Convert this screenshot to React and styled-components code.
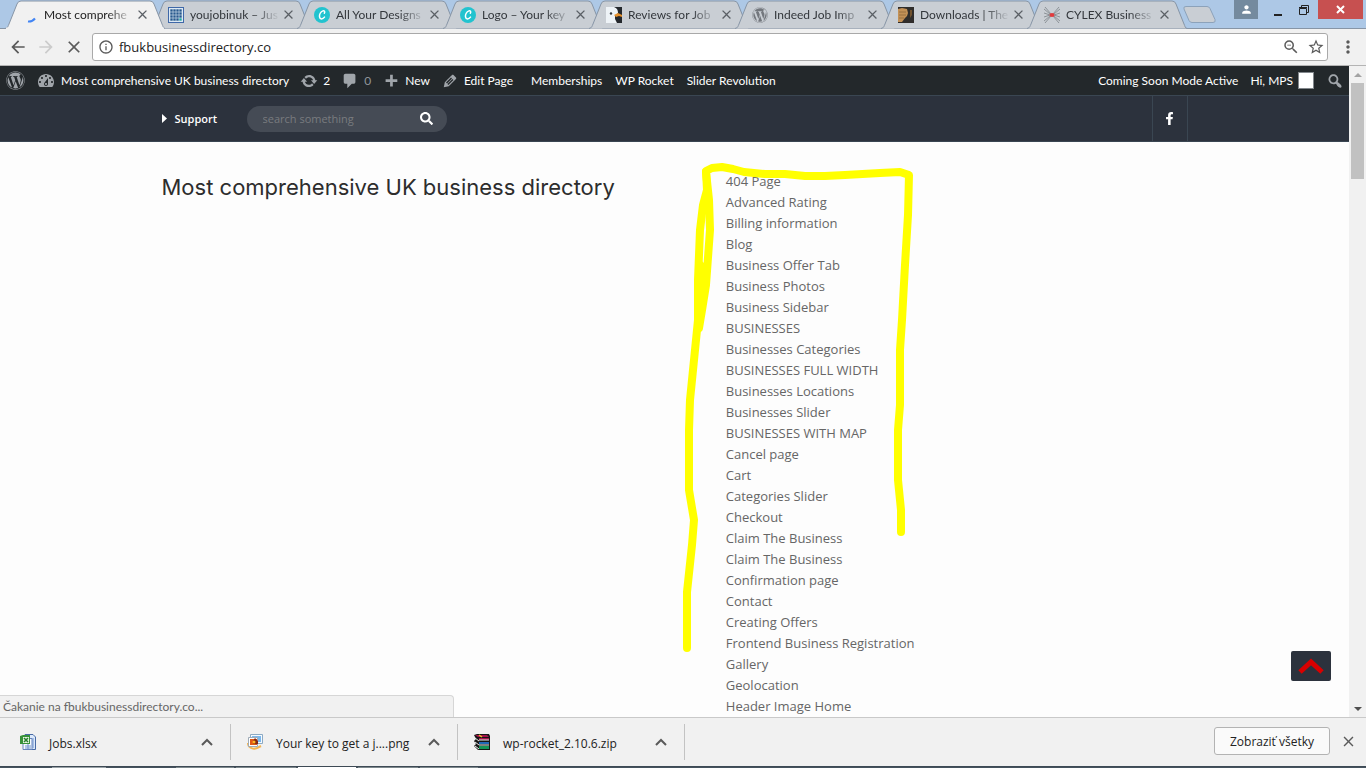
import React from "react";
import styled, { createGlobalStyle } from "styled-components";
import { FaFacebookF, FaSearch, FaWordpress } from "react-icons/fa";
import {
  MdArrowBack,
  MdArrowForward,
  MdClose,
  MdInfoOutline,
  MdMoreVert,
  MdPerson,
  MdStarBorder,
  MdZoomOut,
} from "react-icons/md";

const tabs = [
  { title: "Most comprehe", icon: "spinner", active: true },
  { title: "youjobinuk – Jus", icon: "grid" },
  { title: "All Your Designs", icon: "canva" },
  { title: "Logo – Your key", icon: "canva" },
  { title: "Reviews for Job", icon: "bird" },
  { title: "Indeed Job Imp", icon: "wordpress" },
  { title: "Downloads | The", icon: "fist" },
  { title: "CYLEX Business", icon: "cylex" },
];

const pages = [
  "404 Page",
  "Advanced Rating",
  "Billing information",
  "Blog",
  "Business Offer Tab",
  "Business Photos",
  "Business Sidebar",
  "BUSINESSES",
  "Businesses Categories",
  "BUSINESSES FULL WIDTH",
  "Businesses Locations",
  "Businesses Slider",
  "BUSINESSES WITH MAP",
  "Cancel page",
  "Cart",
  "Categories Slider",
  "Checkout",
  "Claim The Business",
  "Claim The Business",
  "Confirmation page",
  "Contact",
  "Creating Offers",
  "Frontend Business Registration",
  "Gallery",
  "Geolocation",
  "Header Image Home",
];

const downloads = [
  { name: "Jobs.xlsx", icon: "excel" },
  { name: "Your key to get a j....png", icon: "image" },
  { name: "wp-rocket_2.10.6.zip", icon: "archive" },
];

const dashicons = {
  dashboard:
    "M3.76 16h12.48c1.1-1.37 1.76-3.11 1.76-5 0-4.42-3.58-8-8-8s-8 3.58-8 8c0 1.89.66 3.63 1.76 5zM10 4c.55 0 1 .45 1 1s-.45 1-1 1-1-.45-1-1 .45-1 1-1zM6 6c.55 0 1 .45 1 1s-.45 1-1 1-1-.45-1-1 .45-1 1-1zm8 0c.55 0 1 .45 1 1s-.45 1-1 1-1-.45-1-1 .45-1 1-1zm-5.37 5.55L12 7v6c0 1.1-.9 2-2 2s-2-.9-2-2c0-.57.24-1.08.63-1.45zM4 10c.55 0 1 .45 1 1s-.45 1-1 1-1-.45-1-1 .45-1 1-1zm12 0c.55 0 1 .45 1 1s-.45 1-1 1-1-.45-1-1 .45-1 1-1zm-5 3c0-.55-.45-1-1-1s-1 .45-1 1 .45 1 1 1 1-.45 1-1z",
  update:
    "M10.2 3.28c3.53 0 6.43 2.61 6.92 6h2.08l-3.5 4-3.5-4h2.32c-.45-1.97-2.21-3.45-4.32-3.45-1.45 0-2.73.71-3.54 1.78L4.95 5.66C6.23 4.2 8.11 3.28 10.2 3.28zm-.4 13.44c-3.52 0-6.43-2.61-6.92-6H.8l3.5-4c1.17 1.33 2.33 2.67 3.5 4H5.48c.45 1.97 2.21 3.45 4.32 3.45 1.45 0 2.73-.71 3.54-1.78l1.71 1.95c-1.28 1.46-3.15 2.38-5.25 2.38z",
  comment:
    "M5 2h9c1.1 0 2 .9 2 2v7c0 1.1-.9 2-2 2h-2l-5 5v-5H5c-1.1 0-2-.9-2-2V4c0-1.1.9-2 2-2z",
  plus: "M17 8v3h-5v5H9v-5H4V8h5V3h3v5h5z",
  edit: "M13.89 3.39l2.71 2.72c.46.46.42 1.24.03 1.64l-8.01 8.02-5.56 1.16 1.16-5.58s7.6-7.63 7.99-8.03c.39-.39 1.22-.39 1.68.07zm-2.73 2.79l-5.59 5.61 1.11 1.11 5.54-5.65zm-2.97 8.23l5.58-5.6-1.07-1.08-5.59 5.6z",
  search:
    "M12.14 4.18c1.87 1.87 2.11 4.75.72 6.89.12.1.22.21.36.31.2.16.47.36.81.59.34.24.56.39.66.47.42.31.73.57.94.78.32.32.6.65.84 1 .25.35.44.69.59 1.04.14.35.21.68.18 1-.02.32-.14.59-.36.81s-.49.34-.81.36c-.31.02-.65-.04-.99-.19-.35-.14-.7-.34-1.04-.59-.35-.24-.68-.52-1-.84-.21-.21-.47-.52-.77-.93-.1-.13-.25-.35-.47-.66-.22-.32-.4-.57-.56-.78-.16-.2-.29-.35-.44-.5-2.07 1.09-4.69.76-6.44-.98-2.14-2.15-2.14-5.64 0-7.78 2.15-2.15 5.63-2.15 7.78 0zm-1.41 6.36c1.36-1.37 1.36-3.58 0-4.95-1.37-1.37-3.59-1.37-4.95 0-1.37 1.37-1.37 3.58 0 4.95 1.36 1.37 3.58 1.37 4.95 0z",
};

const Dashicon = ({ name, size = 20 }) => (
  <svg width={size} height={size} viewBox="0 0 20 20" fill="currentColor" aria-hidden="true">
    <path d={dashicons[name]} />
  </svg>
);

const Favicon = ({ name }) => {
  if (name === "wordpress") return <FaWordpress size={16} color="#73777d" />;
  return (
    <svg width="16" height="16" viewBox="0 0 16 16" aria-hidden="true">
      {name === "spinner" && (
        <path d="M6 14.5q4 .5 7-3" fill="none" stroke="#4285f4" strokeWidth="2" />
      )}
      {name === "grid" && (
        <>
          <path fill="#3f68a8" d="M0 0h16v16H0z" />
          <path fill="#dce9f4" d="M1 1h14v14H1z" />
          {[2, 5, 8, 11].map((y) =>
            [2, 5, 8, 11].map((x) => (
              <rect
                key={`${x}-${y}`}
                x={x + 0.3}
                y={y + 0.3}
                width="2.4"
                height="2.4"
                fill={x === 11 && y === 11 ? "#24a9a4" : "#28598d"}
              />
            ))
          )}
        </>
      )}
      {name === "canva" && (
        <>
          <circle cx="8" cy="8" r="8" fill="#22c3cf" />
          <path
            d="M10.3 6.2c1-1.3.1-2.7-1.4-2.3C6.7 4.5 5.1 7.6 5.5 9.9c.4 2.7 3.2 2.5 5 .2"
            fill="none"
            stroke="#fff"
            strokeWidth="1.5"
            strokeLinecap="round"
          />
        </>
      )}
      {name === "bird" && (
        <>
          <path fill="#24282d" d="M0 0h16v16H0z" />
          <path fill="#eef3f7" d="M0 0h8c3 1 4 3 4 6l-3 3v3l2 4H0z" />
          <path fill="#e5902d" d="M8 8l4-2 4 2v2l-3-1-3 1z" />
          <circle cx="5" cy="6.5" r="1.2" fill="#30363c" />
        </>
      )}
      {name === "fist" && (
        <>
          <path fill="#302d2b" d="M0 0h16v16H0z" />
          <path fill="#c39156" d="M0 2l4-1 5 1 1 4-1 3-2 2-3 4H0z" />
          <path d="M1 5h7M1 8h7M1 11h5" stroke="#9a7040" strokeWidth="1" />
          <path fill="#71522e" d="M12 3h2v5l-2 3z" />
        </>
      )}
      {name === "cylex" && (
        <>
          <path
            d="M0 2l6 5M1 0l6 7M15 0L9 7m7-5l-6 5M0 14l6-5m-5 7l6-7m8 7L9 9m7 5l-6-5M0 6l6 2-6 2M16 6l-6 2 6 2"
            fill="none"
            stroke="#8c9297"
            strokeWidth="1"
          />
          <ellipse cx="8" cy="8" rx="2.5" ry="2" fill="#e23b3e" />
        </>
      )}
    </svg>
  );
};

const FileIcon = ({ name }) => (
  <svg width="16" height="16" viewBox="0 0 16 16" aria-hidden="true">
    {name === "excel" && (
      <>
        <path d="M5 .5h8l2.5 2.5v12.5H5z" fill="#dce9fb" stroke="#486aa5" />
        <path d="M3 4.5h9v11H3z" fill="#f5faff" stroke="#6684bb" />
        <path d="M5 12h6M5 14h6M8 10v5M13 4v10" stroke="#7193cc" />
        <path fill="#38923a" d="M0 2l3-1h7v9H0z" />
        <path fill="#e4f5df" d="M3 3h6v6H3z" />
        <path d="M4 4l4 4m0-4L4 8" stroke="#277d2c" strokeWidth="1.5" />
      </>
    )}
    {name === "image" && (
      <>
        <path d="M1 9c0 4 4 7 9 5l4-2" fill="none" stroke="#f4b551" strokeWidth="2" />
        <path d="M3.5.5h12v9h-12z" fill="#f5faff" stroke="#8caac4" />
        <path d="M5 2h9v6H5z" fill="#7cb8ed" />
        <path d="M1.5 3.5h9v9h-9z" fill="#fff" stroke="#9eabb7" />
        <path fill="#e25a15" d="M3 5h7v6H3z" />
        <path fill="#872810" d="M6 7l2-3 3 3v3H6z" />
        <circle cx="7" cy="8" r="1.5" fill="#ffb423" />
      </>
    )}
    {name === "archive" && (
      <>
        <path fill="#161616" d="M0 1l3-1h12l1 2v14H4l-4-4 2-2-2-3 2-2z" />
        <path fill="#a31249" d="M1 1h12l2 2H4zM5 4h10v2H5z" />
        <path fill="#2268b8" d="M5 8h10v2H5z" />
        <path fill="#149457" d="M5 12h10v3H5z" />
        <path d="M1 4l4 3M1 8l4 3M1 12l4 3M5 6h10M5 11h10" stroke="#e9eae7" />
        <path d="M5 1l3 2" stroke="#f1c82b" strokeWidth="1.5" />
      </>
    )}
  </svg>
);

const BrowserTab = ({ tab }) => (
  <Tab $active={tab.active}>
    <TabShape viewBox="0 0 160 29" preserveAspectRatio="none" aria-hidden="true">
      <path
        d="M0 28.5C3 28 3 26 4 24L12 4q1-3 4-3h129q3 0 4 3l8 20c1 2 1 4 3 4.5"
        fill={tab.active ? "#f1f1f1" : "#c9ced4"}
        stroke="#8795a6"
      />
      {tab.active && <path d="M1 28.5h158" stroke="#f1f1f1" strokeWidth="2" />}
    </TabShape>
    <TabBody>
      <Favicon name={tab.icon} />
      <TabTitle>{tab.title}</TabTitle>
      <IconButton $size={12} $color="#5a5f65" aria-label="Close tab">
        <MdClose size={15} />
      </IconButton>
    </TabBody>
  </Tab>
);

const App = () => {
  return (
    <Browser>
      <GlobalStyle />
      <TabStrip>
        {tabs.map((tab, index) => (
          <BrowserTab tab={tab} key={index} />
        ))}
        <NewTab aria-label="New tab">
          <svg width="36" height="19" viewBox="0 0 36 19">
            <path
              d="M4 1.5h21q2 0 3 2l5 11q1 3-2 3H10q-2 0-3-2L2 4Q1 1.5 4 1.5z"
              fill="#c9ced4"
              stroke="#8ca2ba"
            />
          </svg>
        </NewTab>
        <WindowControls>
          <WindowButton $width={24} $background="#748a9e" aria-label="Profile">
            <MdPerson size={13} color="#fff" />
          </WindowButton>
          <WindowButton $width={40} aria-label="Minimize">
            <svg width="10" height="12"><path d="M1 11h8" stroke="#222" strokeWidth="2" /></svg>
          </WindowButton>
          <WindowButton $width={12} aria-label="Restore">
            <svg width="12" height="12" viewBox="0 0 12 12" fill="none" stroke="#222">
              <path d="M1.5 4.5h7v6h-7zM1 3.5h8" />
              <path d="M3.5 3V1.5h7V8.5H9" />
            </svg>
          </WindowButton>
          <WindowButton $width={45} $background="#c75050" $last aria-label="Close">
            <svg width="10" height="10"><path d="M1 1l7 7m0-7L1 8" stroke="#fff" strokeWidth="2" /></svg>
          </WindowButton>
        </WindowControls>
      </TabStrip>
      <Toolbar>
        <NavButtons>
          <IconButton $size={20} aria-label="Back"><MdArrowBack size={20} /></IconButton>
          <IconButton $size={20} $color="#cbcbcb" aria-label="Forward"><MdArrowForward size={20} /></IconButton>
          <IconButton $size={20} aria-label="Stop"><MdClose size={20} /></IconButton>
        </NavButtons>
        <AddressBar>
          <MdInfoOutline size={16} />
          <AddressInput aria-label="Address" defaultValue="fbukbusinessdirectory.co" />
          <IconButton $size={16} aria-label="Zoom"><MdZoomOut size={18} /></IconButton>
          <IconButton $size={16} aria-label="Bookmark"><MdStarBorder size={18} /></IconButton>
        </AddressBar>
        <IconButton $size={20} aria-label="Menu"><MdMoreVert size={20} /></IconButton>
      </Toolbar>
      <Viewport>
        <Page>
          <AdminBar>
            <AdminGroup>
              <AdminLink href="#" aria-label="WordPress"><FaWordpress size={19} /></AdminLink>
              <AdminLink href="#"><Dashicon name="dashboard" /><span>Most comprehensive UK business directory</span></AdminLink>
              <AdminLink href="#"><Dashicon name="update" size={18} /><span>2</span></AdminLink>
              <AdminLink href="#" $muted><Dashicon name="comment" size={18} /><span>0</span></AdminLink>
              <AdminLink href="#"><Dashicon name="plus" size={18} /><span>New</span></AdminLink>
              <AdminLink href="#"><Dashicon name="edit" size={18} /><span>Edit Page</span></AdminLink>
            </AdminGroup>
            <AdminTextLinks>
              <AdminLink href="#"><span>Memberships</span></AdminLink>
              <AdminLink href="#"><span>WP Rocket</span></AdminLink>
              <AdminLink href="#"><span>Slider Revolution</span></AdminLink>
            </AdminTextLinks>
            <AdminRight>
              <AdminLink href="#"><span>Coming Soon Mode Active</span></AdminLink>
              <AdminLink href="#"><span>Hi, MPS</span><Avatar /></AdminLink>
              <AdminLink href="#" aria-label="Search"><Dashicon name="search" size={18} /></AdminLink>
            </AdminRight>
          </AdminBar>
          <TopBar>
            <Container>
              <SupportLink href="#">
                <svg width="5" height="9"><path d="M0 0l5 4.5L0 9z" fill="#fff" /></svg>
                Support
              </SupportLink>
              <SearchForm>
                <SearchInput aria-label="Search" placeholder="search something" />
                <IconButton $size={14} $color="#fff" aria-label="Search"><FaSearch size={13} /></IconButton>
              </SearchForm>
              <SocialLink href="#" aria-label="Facebook"><FaFacebookF size={13} /></SocialLink>
            </Container>
          </TopBar>
          <Main>
            <SiteTitle>Most comprehensive UK business directory</SiteTitle>
            <PageNav>
              <PageList>
                {pages.map((page, index) => (
                  <li key={index}><a href="#">{page}</a></li>
                ))}
              </PageList>
              <Marker viewBox="680 160 240 500" aria-hidden="true">
                <path d="M687 648V592L692 545 694 520 689 490V430L690 400 695 350 698 320V280L700 230 703 205 707 190 706 171 712 168 722 167 733 169 744 172 765 174H785L805 176H825L845 175 880 173 900 172 909 175 908 215 905 265 902 320 900 350V405L898 430V480L901 510V532" />
                <path d="M706 172L709 200 710 230 706 285 702 310 699 328M699 328L700 265" />
              </Marker>
            </PageNav>
          </Main>
          <StatusBubble>Čakanie na fbukbusinessdirectory.co...</StatusBubble>
          <BackToTop aria-label="Back to top">
            <svg width="26" height="17" viewBox="0 0 26 17">
              <path d="M2 14L13 4l11 10" fill="none" stroke="#d80000" strokeWidth="5" />
            </svg>
          </BackToTop>
        </Page>
        <Scrollbar>
          <ScrollArrow aria-label="Scroll up">
            <svg width="8" height="4"><path d="M0 4l4-4 4 4z" fill="#a3a3a3" /></svg>
          </ScrollArrow>
          <ScrollTrack><ScrollThumb /></ScrollTrack>
          <ScrollArrow aria-label="Scroll down">
            <svg width="8" height="4"><path d="M0 0h8L4 4z" fill="#505050" /></svg>
          </ScrollArrow>
        </Scrollbar>
      </Viewport>
      <DownloadShelf>
        {downloads.map((file) => (
          <Download key={file.name}>
            <FileIcon name={file.icon} />
            <FileName>{file.name}</FileName>
            <IconButton $size={12} aria-label={`Options for ${file.name}`}>
              <svg width="12" height="8"><path d="M1 7l5-5 5 5" fill="none" stroke="#5a5a5a" strokeWidth="2" /></svg>
            </IconButton>
          </Download>
        ))}
        <ShelfActions>
          <ShowAll>Zobraziť všetky</ShowAll>
          <IconButton $size={12} aria-label="Close downloads"><MdClose size={17} /></IconButton>
        </ShelfActions>
      </DownloadShelf>
      <Taskbar>
        <TaskItem $width={50} />
        <TaskItem $width={54} $color="#9aa3a8" />
        <TaskItem $width={66} />
        <TaskItem $width={58} $color="#7e898d" />
        <TaskItem $width={60} $color="#7e898d" />
        <TaskItem $width={58} $color="#fff" />
        <TaskItem $width={60} $color="#7e898d" />
        <TaskItem $width={58} $color="#7e898d" />
      </Taskbar>
    </Browser>
  );
};

const GlobalStyle = createGlobalStyle`
  * {
    box-sizing: border-box;
  }

  body {
    margin: 0;
    font-family: "Open Sans", "Noto Sans", sans-serif;
    font-size: 12px;
  }

  button, input {
    font: inherit;
    border: 0;
    padding: 0;
    background: none;
  }

  a {
    color: inherit;
    text-decoration: none;
  }

  svg {
    flex-shrink: 0;
  }
`;

const Browser = styled.div`
  display: flex;
  flex-direction: column;
  height: 100vh;
  overflow: hidden;
  background: #f1f1f1;
`;

const TabStrip = styled.header`
  display: flex;
  height: 29px;
  padding-left: 5px;
  background: #adc8e6;
  border-bottom: 1px solid #8795a6;
`;

const Tab = styled.div`
  position: relative;
  z-index: ${({ $active }) => ($active ? 2 : 1)};
  flex: 0 1 146px;
  min-width: 60px;
  height: 29px;
  color: ${({ $active }) => ($active ? "#222" : "#33373c")};
`;

const TabShape = styled.svg`
  position: absolute;
  top: 0;
  left: 0;
  width: calc(100% + 14px);
  height: 29px;
`;

const TabBody = styled.div`
  position: relative;
  display: flex;
  align-items: center;
  height: 29px;
  padding: 0 3px 0 17px;
`;

const TabTitle = styled.span`
  flex: 1;
  min-width: 0;
  margin: 0 2px 0 6px;
  overflow: hidden;
  font-family: Lato, sans-serif;
  white-space: nowrap;
  mask-image: linear-gradient(to right, #000 70%, transparent);
`;

const IconButton = styled.button`
  display: flex;
  align-items: center;
  justify-content: center;
  flex-shrink: 0;
  width: ${({ $size }) => $size}px;
  height: ${({ $size }) => $size}px;
  color: ${({ $color }) => $color || "#5a5a5a"};
  cursor: pointer;
`;

const NewTab = styled.button`
  align-self: center;
  height: 19px;
  margin-left: 9px;
`;

const WindowControls = styled.div`
  display: flex;
  margin-left: auto;
  padding-right: 3px;
`;

const WindowButton = styled.button`
  display: flex;
  align-items: center;
  justify-content: center;
  width: ${({ $width }) => $width}px;
  height: 19px;
  margin-left: ${({ $last }) => ($last ? 8 : 0)}px;
  background: ${({ $background }) => $background || "transparent"};
`;

const Toolbar = styled.div`
  display: flex;
  align-items: center;
  height: 37px;
  padding: 0 8px;
  border-bottom: 1px solid #b4b4b4;
`;

const NavButtons = styled.div`
  display: flex;
  gap: 8px;
  margin-right: 8px;
`;

const AddressBar = styled.div`
  display: flex;
  flex: 1;
  align-items: center;
  gap: 9px;
  height: 28px;
  margin-right: 10px;
  padding: 0 3px 0 5px;
  color: #5a5a5a;
  background: #fff;
  border: 1px solid #a9a9a9;
  border-radius: 3px;
`;

const AddressInput = styled.input`
  flex: 1;
  min-width: 0;
  margin-left: -4px;
  color: #222;
  font-size: 13px;
  outline: 0;
`;

const Viewport = styled.div`
  display: flex;
  flex: 1;
  min-height: 0;
`;

const Page = styled.div`
  position: relative;
  flex: 1;
  min-width: 0;
  overflow: hidden;
  background: #fdfdfd;
`;

const AdminBar = styled.nav`
  display: flex;
  height: 29px;
  padding: 0 5px 0 6px;
  color: #eee;
  font-family: Lato, sans-serif;
  background: #23282b;
`;

const AdminGroup = styled.div`
  display: flex;
  gap: 11px;
`;

const AdminTextLinks = styled.div`
  display: flex;
  gap: 13px;
  margin-left: 18px;
`;

const AdminRight = styled.div`
  display: flex;
  gap: 12px;
  margin-left: auto;
`;

const AdminLink = styled.a`
  display: flex;
  align-items: center;
  gap: 5px;
  white-space: nowrap;

  svg {
    color: #a0a5aa;
  }

  span {
    color: ${({ $muted }) => ($muted ? "#90959a" : "#fff")};
  }
`;

const Avatar = styled.i`
  width: 16px;
  height: 17px;
  background: #fff;
  border: 1px solid #82878c;
`;

const TopBar = styled.div`
  height: 47px;
  color: #fff;
  font-size: 11px;
  background: #2c323d;
  border-top: 1px solid #3a4652;
  border-bottom: 1px solid #3a4652;
`;

const Container = styled.div`
  display: flex;
  align-items: center;
  max-width: 1026px;
  height: 100%;
  margin: 0 auto;
`;

const SupportLink = styled.a`
  display: flex;
  align-items: center;
  gap: 8px;
  width: 85px;
  font-weight: 600;
`;

const SearchForm = styled.div`
  display: flex;
  align-items: center;
  width: 200px;
  height: 26px;
  padding: 0 13px 0 16px;
  background: #454b55;
  border-radius: 13px;
`;

const SearchInput = styled.input`
  flex: 1;
  min-width: 0;
  color: #fff;
  outline: 0;

  &::placeholder {
    color: #797b7f;
  }
`;

const SocialLink = styled.a`
  display: flex;
  align-items: center;
  justify-content: center;
  width: 36px;
  height: 100%;
  margin-left: auto;
  border: solid #3a4652;
  border-width: 0 1px;
`;

const Main = styled.main`
  display: grid;
  grid-template-columns: 55% 45%;
  max-width: 1026px;
  margin: 0 auto;
  padding-top: 29px;
`;

const SiteTitle = styled.h1`
  margin: 0;
  color: #2d2d2d;
  font-family: Inter, sans-serif;
  font-size: 22px;
  font-weight: 400;
  line-height: 32px;
  white-space: nowrap;
`;

const PageNav = styled.nav`
  position: relative;
`;

const PageList = styled.ul`
  margin: 0;
  padding: 0;
  color: #666;
  font-size: 13px;
  line-height: 21px;
  list-style: none;
`;

const Marker = styled.svg`
  position: absolute;
  top: -11px;
  left: -46px;
  width: 240px;
  height: 500px;
  fill: none;
  stroke: #ff0;
  stroke-width: 8px;
  stroke-linecap: round;
  stroke-linejoin: round;
  pointer-events: none;
`;

const StatusBubble = styled.div`
  position: absolute;
  bottom: 0;
  left: 0;
  width: 454px;
  max-width: 50%;
  height: 22px;
  padding-left: 3px;
  color: #666;
  font-family: Lato, "Open Sans", sans-serif;
  line-height: 21px;
  background: #f1f1f1;
  border: 1px solid #d6d6d6;
  border-width: 1px 1px 0 0;
  border-radius: 0 4px 0 0;
`;

const BackToTop = styled.button`
  position: absolute;
  right: 18px;
  bottom: 36px;
  display: flex;
  align-items: center;
  justify-content: center;
  width: 40px;
  height: 30px;
  background: #2c323d;
  border-radius: 2px;
`;

const Scrollbar = styled.div`
  display: flex;
  flex-direction: column;
  width: 17px;
  padding: 0 2px;
  background: #f1f1f1;
`;

const ScrollArrow = styled.button`
  display: flex;
  align-items: center;
  justify-content: center;
  height: 17px;
`;

const ScrollTrack = styled.div`
  flex: 1;
`;

const ScrollThumb = styled.div`
  height: 96px;
  background: #c1c1c1;
`;

const DownloadShelf = styled.footer`
  display: flex;
  align-items: center;
  height: 49px;
  padding-left: 4px;
  border-top: 1px solid #c9c9c9;
`;

const Download = styled.div`
  display: flex;
  align-items: center;
  width: 227px;
  height: 36px;
  padding: 0 17px 0 16px;
  border-right: 1px solid #c3c3c3;
`;

const FileName = styled.span`
  flex: 1;
  padding: 4px 0 0 13px;
  color: #222;
  font-size: 12px;
  line-height: 18px;
  white-space: nowrap;
`;

const ShelfActions = styled.div`
  display: flex;
  align-items: center;
  gap: 12px;
  margin-left: auto;
  padding: 0 12px 2px 0;
`;

const ShowAll = styled.button`
  width: 116px;
  height: 28px;
  color: #222;
  background: #fafafa;
  border: 1px solid #b3b3b3;
  border-radius: 3px;
`;

const Taskbar = styled.div`
  display: flex;
  gap: 2px;
  height: 2px;
  background: #46535e;
  border-top: 1px solid #3e4a55;
`;

const TaskItem = styled.span`
  width: ${({ $width }) => $width}px;
  background: ${({ $color }) => $color || "transparent"};
`;

export default App;
